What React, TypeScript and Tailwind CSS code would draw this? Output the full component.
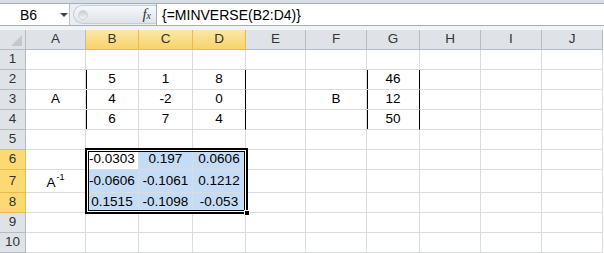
import React from "react";

const cols = ["A", "B", "C", "D", "E", "F", "G", "H", "I", "J"];
const selCols = ["B", "C", "D"];

type Cell = { text?: React.ReactNode; sel?: boolean };

const data: Record<number, Record<string, Cell>> = {
  2: { B: { text: "5" }, C: { text: "1" }, D: { text: "8" }, G: { text: "46" } },
  3: { A: { text: "A" }, B: { text: "4" }, C: { text: "-2" }, D: { text: "0" }, F: { text: "B" }, G: { text: "12" } },
  4: { B: { text: "6" }, C: { text: "7" }, D: { text: "4" }, G: { text: "50" } },
  6: { B: { text: "-0.0303" }, C: { text: "0.197", sel: true }, D: { text: "0.0606", sel: true } },
  7: {
    A: {
      text: (
        <span className="relative top-[2px]">
          A<span className="inline-block text-[9px] relative -top-[7px] ml-[1px]">-1</span>
        </span>
      ),
    },
    B: { text: "-0.0606", sel: true },
    C: { text: "-0.1061", sel: true },
    D: { text: "0.1212", sel: true },
  },
  8: { B: { text: "0.1515", sel: true }, C: { text: "-0.1098", sel: true }, D: { text: "-0.053", sel: true } },
};

const rowNums = [1, 2, 3, 4, 5, 6, 7, 8, 9, 10];

function FormulaBar() {
  return (
    <div className="bg-[#dde2e8]">
      <div className="h-[4px] border-b border-[#a7aeb7] bg-[#d8dde4]" />
      <div className="flex h-[21px]">
        <div className="relative w-[70px] bg-white border-r border-[#b9bfc7] flex items-center">
          <span className="pl-[20px] text-[14px] text-black leading-none">B6</span>
          <span className="absolute left-[60px] top-[9px] w-0 h-0 border-l-[4px] border-r-[4px] border-t-[4px] border-l-transparent border-r-transparent border-t-[#444]" />
        </div>
        <div className="w-[86px] flex items-center bg-[#eceff2] pl-[3px]">
          <div className="h-[19px] flex-1 rounded-l-full bg-gradient-to-b from-[#f7f8fa] to-[#dfe3e8] border border-[#c6ccd3] border-r-0 flex items-center">
            <span className="ml-[4px] w-[10px] h-[10px] rounded-full bg-gradient-to-b from-[#c9ced4] to-[#f3f4f6] border border-[#cfd4da]" />
            <span
              className="ml-auto mr-[5px] italic text-[15px] text-[#333] leading-none"
              style={{ fontFamily: '"Liberation Serif", serif' }}
            >
              f<span className="text-[10px]">x</span>
            </span>
          </div>
        </div>
        <div className="flex-1 bg-white border-l border-[#a7aeb7] flex items-center pl-[5px]">
          <span className="text-[14px] text-black leading-none">{"{=MINVERSE(B2:D4)}"}</span>
        </div>
      </div>
      <div className="h-[5px] border-t border-[#a7aeb7] bg-[#f1f3f5]" />
    </div>
  );
}

function cellClass(col: string, n: number, sel?: boolean) {
  let cls = "flex items-center justify-center border-r border-b border-solid border-[#dadcdd] ";
  cls += sel ? "bg-[#c5dcf6]" : "bg-white";
  if ((col === "B" || col === "G") && n >= 2 && n <= 4) cls += " shadow-[inset_1px_0_0_#000]";
  if ((col === "D" || col === "G") && n >= 2 && n <= 4) cls += " border-r-black";
  return cls;
}

export default function App() {
  return (
    <div
      className="w-[604px] h-[253px] overflow-hidden bg-white text-[13.5px] text-black"
      style={{ fontFamily: '"Liberation Sans", Arial, sans-serif' }}
    >
      <FormulaBar />
      <div className="relative grid grid-cols-[26px_60px_53px_54px_53px_60px_61px_53px_61px_61px_61px] grid-rows-[20px_20px_20px_20px_20px_20px_20px_23px_20px_20px_20px]">
        {/* header row */}
        <div className="relative bg-[#dfe3e8] border-r border-b border-[#b5bcc4] overflow-hidden">
          <svg className="absolute right-[3px] bottom-[3px]" width="11" height="11" viewBox="0 0 11 11">
            <polygon points="11,0 11,11 0,11" fill="#c3c8ce" />
          </svg>
        </div>
        {cols.map((c) => (
          <div
            key={c}
            className={
              selCols.includes(c)
                ? "flex items-center justify-center bg-gradient-to-b from-[#fbe7a8] to-[#f8d368] border-r border-b border-[#f0b74a] text-[#333]"
                : "flex items-center justify-center bg-[#dfe3e8] border-r border-b border-[#b5bcc4] text-[#333]"
            }
          >
            {c}
          </div>
        ))}

        {rowNums.map((n) => {
          const rowSel = n >= 6 && n <= 8;
          const cells = data[n] || {};
          return (
            <React.Fragment key={n}>
              <div
                className={
                  rowSel
                    ? "flex items-center justify-center bg-[#fcd973] border-r border-b border-[#f0b74a] text-[#333]"
                    : "flex items-center justify-center bg-[#dfe3e8] border-r border-b border-[#b5bcc4] text-[#333]"
                }
              >
                {n}
              </div>
              {cols.map((c) => {
                const cell = cells[c] || {};
                return (
                  <div key={c} className={cellClass(c, n, cell.sel)}>
                    {cell.text}
                  </div>
                );
              })}
            </React.Fragment>
          );
        })}

        {/* selection outline B6:D8 */}
        <div className="absolute left-[85px] top-[118px] w-[163px] h-[66px] border-2 border-black pointer-events-none">
          <div className="w-full h-full border border-white">
            <div className="w-full h-full border border-black" />
          </div>
          <span className="absolute -right-[4px] -bottom-[4px] w-[6px] h-[6px] bg-black border border-white" />
        </div>
      </div>
    </div>
  );
}
